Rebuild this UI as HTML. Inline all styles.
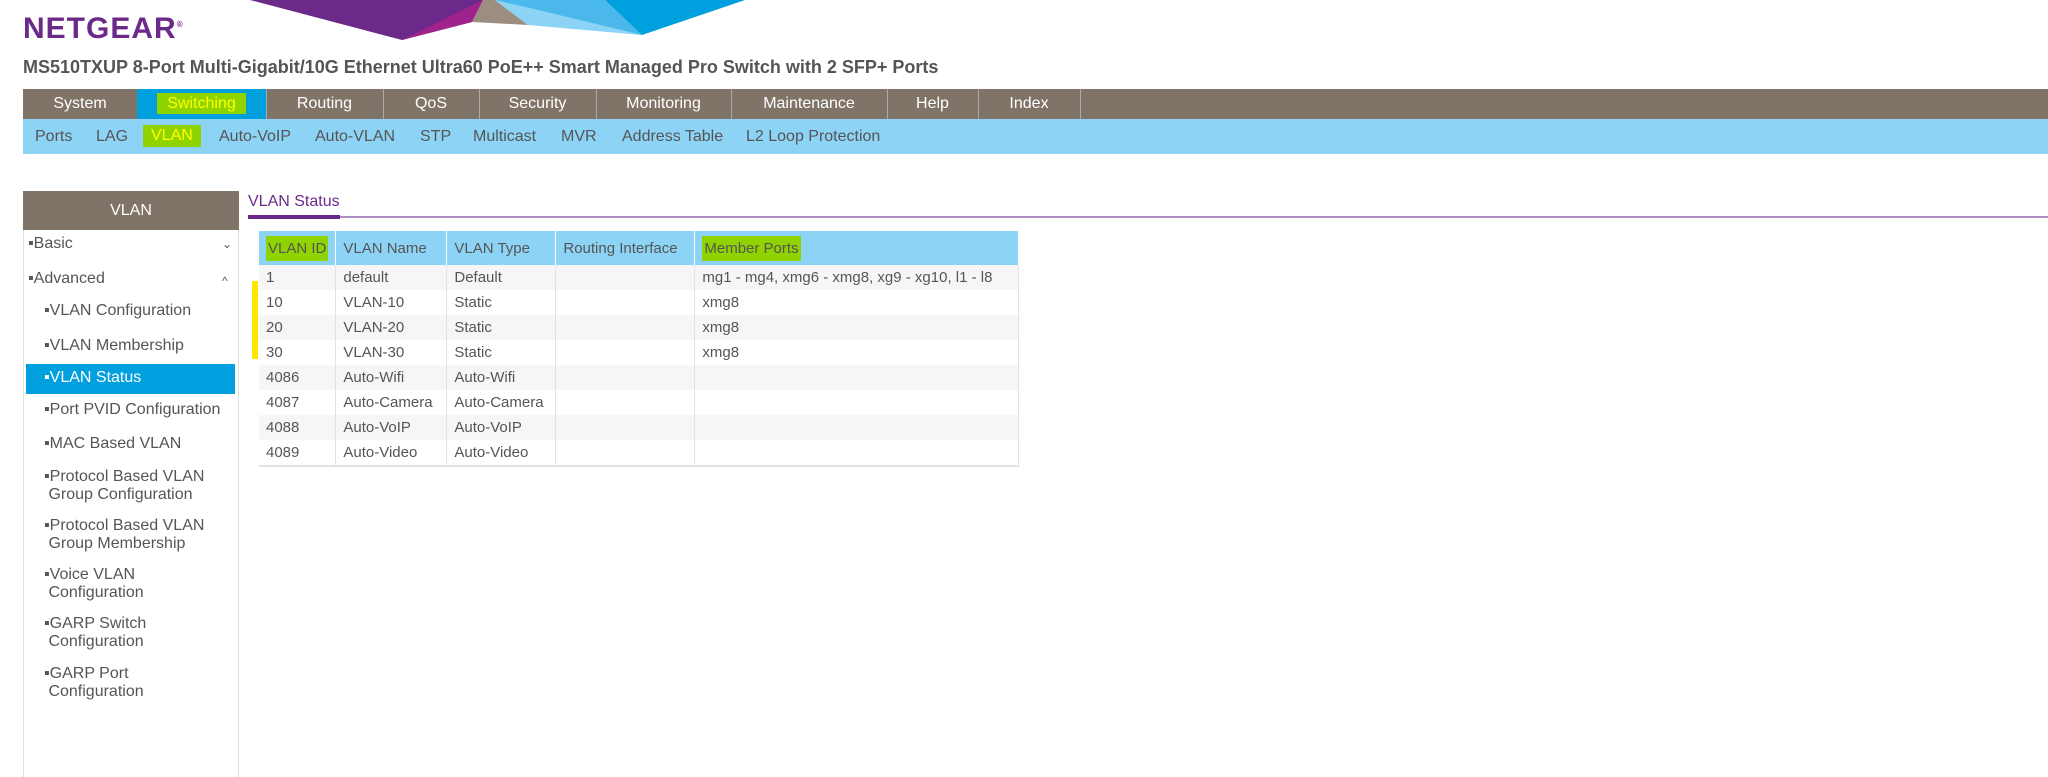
<!DOCTYPE html>
<html><head><meta charset="utf-8"><style>
body{margin:0;width:2048px;height:777px;background:#fff;font-family:"Liberation Sans",sans-serif;position:relative;overflow:hidden;color:#555}
.a{position:absolute}
.nav{top:89px;left:23px;width:2025px;height:30px;background:#807468}
.nav div{position:absolute;top:0;height:30px;line-height:30px;color:#fff;font-size:16px;text-align:center;border-right:1px solid #aaa}
.sub{top:119px;left:23px;width:2025px;height:35px;background:#8dd3f5}
.sub span{position:absolute;top:0;line-height:35px;font-size:16px;color:#555}
.side{font-size:16px;color:#555;line-height:18px}
table{border-collapse:collapse;font-size:15px;color:#555}
td{height:25px;padding:0 7px;border-right:1px solid #e2e2e2;white-space:nowrap}
tr.h td{background:#8dd3f5;height:34px;border-right:1px solid #fff}
tr:nth-child(even) td{background:#f6f6f6}
.hl{background:#8fd400}
</style></head><body>
<svg class="a" style="left:0;top:0" width="800" height="45">
<polygon points="250,0 483,0 472,22 402,40" fill="#6b2a8a"/>
<polygon points="483,0 472,22 402,40" fill="#a0228c"/>
<polygon points="483,0 495,0 528,25 472,22" fill="#9c8d80"/>
<polygon points="495,0 605,0 642,35 528,25" fill="#8dd3f5"/>
<polygon points="495,0 605,0 642,35 530,8" fill="#4ab8ea"/>
<polygon points="605,0 745,0 642,35" fill="#00a0df"/>
</svg>
<div class="a" style="left:23px;top:12px;font-size:30px;font-weight:bold;color:#6b2a8a;letter-spacing:1px">NETGEAR<sup style="font-size:8px">®</sup></div>
<div class="a" style="left:23px;top:57px;font-size:18px;font-weight:bold;color:#555">MS510TXUP 8-Port Multi-Gigabit/10G Ethernet Ultra60 PoE++ Smart Managed Pro Switch with 2 SFP+ Ports</div>
<div class="a nav">
<div style="left:0;width:114px">System</div>
<div style="left:114px;width:129px;background:#00a0df"><span class="hl" style="color:#ff0;padding:2px 10px">Switching</span></div>
<div style="left:243px;width:117px">Routing</div>
<div style="left:360px;width:96px">QoS</div>
<div style="left:456px;width:117px">Security</div>
<div style="left:573px;width:135px">Monitoring</div>
<div style="left:708px;width:156px">Maintenance</div>
<div style="left:864px;width:91px">Help</div>
<div style="left:955px;width:102px">Index</div>
</div>
<div class="a sub">
<span style="left:12px">Ports</span><span style="left:73px">LAG</span>
<span style="left:120px;top:6px;line-height:22px;color:#ff0;padding:0 8px" class="hl">VLAN</span>
<span style="left:196px">Auto-VoIP</span><span style="left:292px">Auto-VLAN</span><span style="left:397px">STP</span><span style="left:450px">Multicast</span><span style="left:538px">MVR</span><span style="left:599px">Address Table</span><span style="left:723px">L2 Loop Protection</span>
</div>
<div class="a" style="left:23px;top:191px;width:216px;height:586px;border-left:1px solid #ddd;border-right:1px solid #ddd;box-sizing:border-box"></div>
<div class="a" style="left:23px;top:191px;width:216px;height:39px;background:#807468;color:#fff;font-size:16px;line-height:39px;text-align:center">VLAN</div>
<div class="a" style="left:26px;top:364px;width:209px;height:30px;background:#00a0df"></div>
<div class="side">
<div class="a" style="left:28px;top:235px">▪Basic</div><div class="a" style="left:222px;top:235px;font-size:12px">⌄</div>
<div class="a" style="left:28px;top:270px">▪Advanced</div><div class="a" style="left:222px;top:272px;font-size:12px">^</div>
<div class="a" style="left:44px;top:302px">▪VLAN Configuration</div>
<div class="a" style="left:44px;top:337px">▪VLAN Membership</div>
<div class="a" style="left:44px;top:369px;color:#fff">▪VLAN Status</div>
<div class="a" style="left:44px;top:401px">▪Port PVID Configuration</div>
<div class="a" style="left:44px;top:435px">▪MAC Based VLAN</div>
<div class="a" style="left:44px;top:468px">▪Protocol Based VLAN<br>&nbsp;Group Configuration</div>
<div class="a" style="left:44px;top:517px">▪Protocol Based VLAN<br>&nbsp;Group Membership</div>
<div class="a" style="left:44px;top:566px">▪Voice VLAN<br>&nbsp;Configuration</div>
<div class="a" style="left:44px;top:615px">▪GARP Switch<br>&nbsp;Configuration</div>
<div class="a" style="left:44px;top:665px">▪GARP Port<br>&nbsp;Configuration</div>
</div>
<div class="a" style="left:248px;top:193px;font-size:16px;color:#6b2a8a">VLAN Status</div>
<div class="a" style="left:248px;top:216px;width:1800px;height:2px;background:#b08cc4"></div>
<div class="a" style="left:248px;top:215px;width:92px;height:4px;background:#6b2a8a"></div>
<div class="a" style="left:252px;top:281px;width:6px;height:78px;background:#ffe600"></div>
<table class="a" style="left:259px;top:231px;width:760px">
<tr class="h"><td style="width:62px"><span class="hl" style="padding:4px 2px">VLAN ID</span></td><td style="width:96px">VLAN Name</td><td style="width:94px">VLAN Type</td><td style="width:124px">Routing Interface</td><td><span class="hl" style="padding:4px 2px">Member Ports</span></td></tr>
<tr><td>1</td><td>default</td><td>Default</td><td></td><td>mg1 - mg4, xmg6 - xmg8, xg9 - xg10, l1 - l8</td></tr>
<tr><td>10</td><td>VLAN-10</td><td>Static</td><td></td><td>xmg8</td></tr>
<tr><td>20</td><td>VLAN-20</td><td>Static</td><td></td><td>xmg8</td></tr>
<tr><td>30</td><td>VLAN-30</td><td>Static</td><td></td><td>xmg8</td></tr>
<tr><td>4086</td><td>Auto-Wifi</td><td>Auto-Wifi</td><td></td><td></td></tr>
<tr><td>4087</td><td>Auto-Camera</td><td>Auto-Camera</td><td></td><td></td></tr>
<tr><td>4088</td><td>Auto-VoIP</td><td>Auto-VoIP</td><td></td><td></td></tr>
<tr style="border-bottom:2px solid #e2e2e2"><td>4089</td><td>Auto-Video</td><td>Auto-Video</td><td></td><td></td></tr>
</table>
</body></html>
